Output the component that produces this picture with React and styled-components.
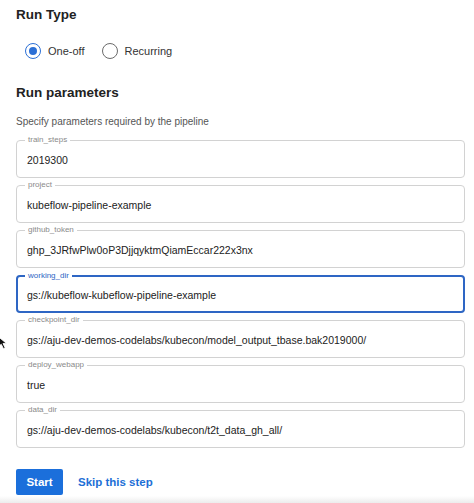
import React from 'react'
import styled, { createGlobalStyle } from 'styled-components'

const GlobalStyle = createGlobalStyle`
  html, body {
    margin: 0;
    padding: 0;
    background: #ffffff;
  }
  body {
    font-family: 'Liberation Sans', Arial, sans-serif;
    color: #222222;
  }
`

const Page = styled.div`
  position: relative;
  width: 474px;
  height: 503px;
  overflow: hidden;
  box-sizing: border-box;
  padding: 6px 9px 0 16px;
  background: #ffffff;
`

const Heading = styled.h2`
  margin: 0;
  font-size: 13.5px;
  font-weight: 700;
  line-height: 17px;
  color: #222222;
`

const RadioRow = styled.div`
  display: flex;
  align-items: center;
  gap: 17px;
  margin: 19px 0 0 9px;
  height: 17px;
`

const RadioOption = styled.label`
  display: flex;
  align-items: center;
  gap: 7px;
  font-size: 11px;
  color: #333333;
`

const RadioCircle = styled.span`
  box-sizing: border-box;
  width: 16px;
  height: 16px;
  border-radius: 50%;
  border: 1.5px solid ${p => (p.checked ? '#2b6fd6' : '#6b6b6b')};
  display: flex;
  align-items: center;
  justify-content: center;
  &::after {
    content: '';
    width: 8px;
    height: 8px;
    border-radius: 50%;
    background: ${p => (p.checked ? '#2b6fd6' : 'transparent')};
  }
`

const SectionHeading = styled(Heading)`
  margin-top: 25px;
`

const Hint = styled.p`
  margin: 15px 0 0 0;
  font-size: 10px;
  color: #555555;
  line-height: 12px;
`

const Fields = styled.div`
  display: flex;
  flex-direction: column;
  gap: 7px;
  margin-top: 12px;
`

const Field = styled.div`
  position: relative;
  box-sizing: border-box;
  height: 38px;
  border: ${p => (p.focused ? '2px solid #2e66c4' : '1px solid #d2d2d2')};
  border-radius: 4px;
  display: flex;
  align-items: center;
  padding-left: ${p => (p.focused ? '9px' : '10px')};
`

const FieldLabel = styled.span`
  position: absolute;
  top: -6px;
  left: ${p => (p.focused ? '7px' : '8px')};
  padding: 0 3px;
  background: #ffffff;
  font-size: 8px;
  line-height: 10px;
  color: ${p => (p.focused ? '#2e66c4' : '#8a8a8a')};
`

const FieldValue = styled.span`
  font-size: 10.5px;
  color: #222222;
  white-space: nowrap;
  margin-top: 1px;
`

const Actions = styled.div`
  display: flex;
  align-items: center;
  gap: 15px;
  margin-top: 21px;
`

const StartButton = styled.button`
  box-sizing: border-box;
  width: 47px;
  height: 26px;
  border: none;
  border-radius: 2px;
  background: #1b6fdb;
  color: #ffffff;
  font-family: inherit;
  font-size: 11.5px;
  font-weight: 700;
  padding: 0;
`

const SkipLink = styled.a`
  font-size: 11.5px;
  font-weight: 700;
  color: #1d6fd6;
  text-decoration: none;
`

const BottomEdge = styled.div`
  position: absolute;
  left: 0;
  right: 0;
  bottom: 0;
  height: 7px;
  background: linear-gradient(to bottom, #ffffff, #ececec);
`

const Cursor = styled.svg`
  position: absolute;
  left: -3px;
  top: 336px;
`

const fields = [
  { label: 'train_steps', value: '2019300' },
  { label: 'project', value: 'kubeflow-pipeline-example' },
  { label: 'github_token', value: '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' },
  { label: 'working_dir', value: 'gs://kubeflow-kubeflow-pipeline-example', focused: true },
  {
    label: 'checkpoint_dir',
    value: 'gs://aju-dev-demos-codelabs/kubecon/model_output_tbase.bak2019000/',
  },
  { label: 'deploy_webapp', value: 'true' },
  { label: 'data_dir', value: 'gs://aju-dev-demos-codelabs/kubecon/t2t_data_gh_all/' },
]

const App = () => (
  <Page>
    <GlobalStyle />
    <Heading>Run Type</Heading>
    <RadioRow>
      <RadioOption>
        <RadioCircle checked />
        One-off
      </RadioOption>
      <RadioOption>
        <RadioCircle />
        Recurring
      </RadioOption>
    </RadioRow>

    <SectionHeading>Run parameters</SectionHeading>
    <Hint>Specify parameters required by the pipeline</Hint>

    <Fields>
      {fields.map(f => (
        <Field key={f.label} focused={f.focused}>
          <FieldLabel focused={f.focused}>{f.label}</FieldLabel>
          <FieldValue>{f.value}</FieldValue>
        </Field>
      ))}
    </Fields>

    <Actions>
      <StartButton>Start</StartButton>
      <SkipLink href="#">Skip this step</SkipLink>
    </Actions>

    <BottomEdge />
    <Cursor width="12" height="14" viewBox="0 0 12 16">
      <path d="M1 1 L1 12 L4 9.5 L6.5 14.5 L8.5 13.5 L6 8.5 L10 8.5 Z" fill="#111" stroke="#fff" strokeWidth="1" />
    </Cursor>
  </Page>
)

export default App
